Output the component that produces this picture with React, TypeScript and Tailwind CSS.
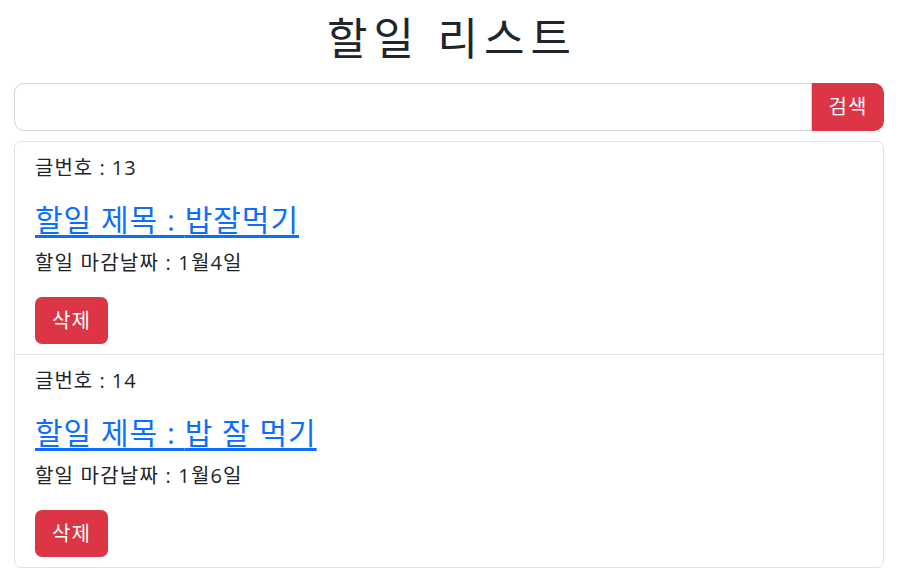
import React from 'react';

const todos = [
  { id: 13, title: '밥잘먹기', due: '1월4일' },
  { id: 14, title: '밥 잘 먹기', due: '1월6일' }
];

const App: React.FC = () => {
  return (
    <div
      className="min-h-screen bg-white pl-[14px] pr-[16px] text-[#212529]"
      style={{ fontFamily: '"Open Sans", "Noto Sans CJK KR", sans-serif' }}
    >
      <h1 className="pt-[14px] mb-[21px] pl-[6px] text-center text-[44px] leading-[48px] font-normal tracking-[6px]">
        할일 리스트
      </h1>

      {/* Search */}
      <div className="flex h-[48px]">
        <input
          type="text"
          className="flex-1 min-w-0 rounded-l-[10px] border border-[#ced4da] px-[20px] text-[20px] outline-none"
        />
        <button className="w-[72px] rounded-r-[10px] bg-[#dc3545] text-[20px] tracking-[1px] text-white">
          검색
        </button>
      </div>

      {/* Todo list */}
      <ul className="mt-[10px] rounded-[7px] border border-[#dee2e6]">
        {todos.map((todo, i) => (
          <li
            key={todo.id}
            className={`px-[20px] pt-[11px] pb-[10px] ${i < todos.length - 1 ? 'border-b border-[#dee2e6]' : ''}`}
          >
            <p className="mb-[19px] text-[20px] leading-[30px] tracking-[1px]">글번호 : {todo.id}</p>
            <h4 className="mb-[10px] text-[30px] leading-[36px] tracking-[1px]">
              <a href="#" className="text-[#0d6efd] underline underline-offset-[4px]">
                할일 제목 : {todo.title}
              </a>
            </h4>
            <p className="mb-[19px] text-[20px] leading-[30px] tracking-[1.2px]">할일 마감날짜 : {todo.due}</p>
            <button className="h-[47px] w-[73px] rounded-[7px] bg-[#dc3545] text-[20px] tracking-[1px] text-white">
              삭제
            </button>
          </li>
        ))}
      </ul>
    </div>
  );
};

export default App;
